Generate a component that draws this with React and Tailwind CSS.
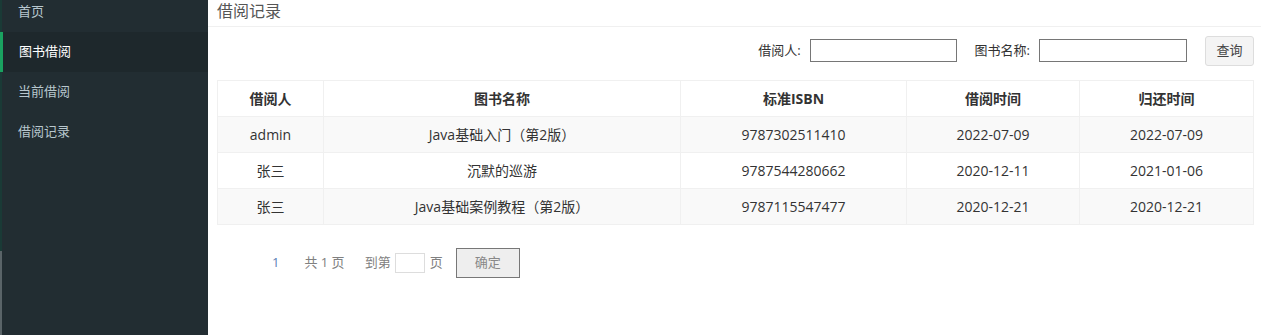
import React from 'react';

const rows = [
  { user: 'admin', name: 'Java基础入门（第2版）', isbn: '9787302511410', borrow: '2022-07-09', back: '2022-07-09' },
  { user: '张三', name: '沉默的巡游', isbn: '9787544280662', borrow: '2020-12-11', back: '2021-01-06' },
  { user: '张三', name: 'Java基础案例教程（第2版）', isbn: '9787115547477', borrow: '2020-12-21', back: '2020-12-21' },
];

const menu = ['首页', '图书借阅', '当前借阅', '借阅记录'];

const App = () => {
  return (
    <div className="flex h-[335px] w-[1261px] overflow-hidden bg-white font-['Open_Sans','Noto_Sans_CJK_SC',sans-serif] text-[14px] text-[#333]">
      <aside className="flex w-[208px] shrink-0 bg-[#222d32]">
        <div className="flex w-[2px] flex-col">
          <div className="h-[251px] bg-[#1a3a36]" />
          <div className="flex-1 bg-[#5a6468]" />
        </div>
        <ul className="-mt-[8px] flex-1">
          {menu.map((item, i) => (
            <li
              key={item}
              className={`flex h-[40px] items-center pl-[16px] text-[13px] ${i === 1 ? '-ml-[2px] border-l-[3px] border-[#1aa260] bg-[#1e282c] pl-[15px] text-white' : 'text-[#b8c7ce]'}`}
            >
              {item}
            </li>
          ))}
        </ul>
      </aside>

      <main className="flex-1">
        <div className="flex h-[27px] items-start border-b border-[#f0f0f0] pl-[9px] text-[16px] leading-[22px] text-[#555]">
          借阅记录
        </div>

        <div className="flex h-[53px] items-center justify-end gap-[18px] pb-[6px] pr-[8px] text-[13px] text-[#333]">
          <label className="flex items-center">
            <span className="mr-[9px]">借阅人:</span>
            <input className="h-[23px] w-[147px] border border-[#767676] bg-white" />
          </label>
          <label className="flex items-center">
            <span className="mr-[9px]">图书名称:</span>
            <input className="h-[23px] w-[148px] border border-[#767676] bg-white" />
          </label>
          <button className="h-[30px] w-[49px] rounded-[3px] border border-[#ddd] bg-[#f4f4f4] text-[13px] text-[#444]">
            查询
          </button>
        </div>

        <div className="pl-[9px] pr-[8px]">
          <table className="w-full table-fixed border-collapse border border-[#f0f0f0] text-center">
            <colgroup>
              <col className="w-[106px]" />
              <col className="w-[357px]" />
              <col className="w-[226px]" />
              <col className="w-[173px]" />
              <col className="w-[174px]" />
            </colgroup>
            <thead>
              <tr className="h-[36px] bg-white font-bold">
                {['借阅人', '图书名称', '标准ISBN', '借阅时间', '归还时间'].map((h) => (
                  <th key={h} className="border border-[#f0f0f0] font-bold">{h}</th>
                ))}
              </tr>
            </thead>
            <tbody>
              {rows.map((r, i) => (
                <tr key={r.isbn} className={`h-[36px] ${i % 2 === 0 ? 'bg-[#f9f9f9]' : 'bg-white'}`}>
                  <td className="border border-[#f0f0f0]">{r.user}</td>
                  <td className="border border-[#f0f0f0]">{r.name}</td>
                  <td className="border border-[#f0f0f0]">{r.isbn}</td>
                  <td className="border border-[#f0f0f0]">{r.borrow}</td>
                  <td className="border border-[#f0f0f0]">{r.back}</td>
                </tr>
              ))}
            </tbody>
          </table>
        </div>

        <div className="mt-[23px] flex items-center pl-[64px] text-[13px] text-[#808080]">
          <span className="text-[#5b7fb5]">1</span>
          <span className="ml-[25px]">共 1 页</span>
          <span className="ml-[20px]">到第</span>
          <input className="ml-[4px] mr-[5px] h-[20px] w-[30px] border border-[#ddd] bg-white" />
          <span>页</span>
          <button className="ml-[13px] h-[30px] w-[64px] border border-[#777] bg-[#eee] text-[13px] text-[#888]">
            确定
          </button>
        </div>
      </main>
    </div>
  );
};

export default App;
